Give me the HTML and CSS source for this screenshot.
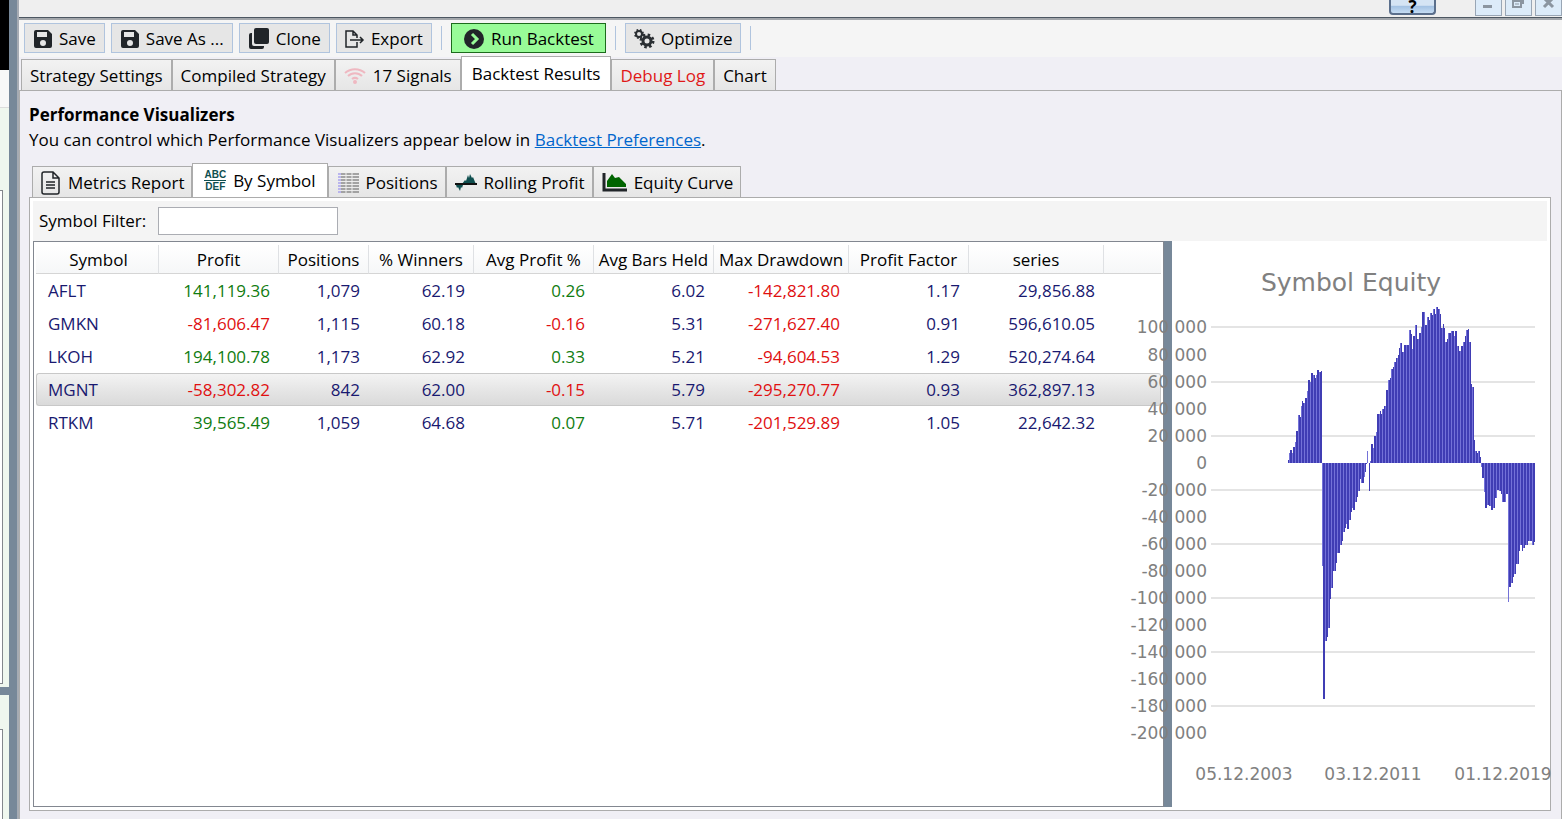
FILE: index.html
```html
<!DOCTYPE html>
<html lang="en">
<head>
  <meta charset="UTF-8">
  <meta name="viewport" content="width=device-width, initial-scale=1.0">
  <title>Backtest Results</title>
  <link rel="stylesheet" href="styles.css">
</head>
<body>
  <div class="dock">
    <div class="dock-dark"></div>
    <div class="dock-head"></div>
    <div class="dock-pane first"><div class="dock-box"></div></div>
    <div class="dock-split"></div>
    <div class="dock-pane second"><div class="dock-box"></div></div>
  </div>
  <div class="splitter"></div>

  <main class="window">
    <header class="titlebar">
      <button class="help" title="Help">?</button>
      <button class="win-btn" title="Minimize">
        <svg width="24" height="15"><path d="M7 5h9v3H7z" fill="#8b95a0"/></svg>
      </button>
      <button class="win-btn" title="Restore">
        <svg width="24" height="15" fill="none" stroke="#8b95a0"><path d="M10 0v-2h7v5h-2" stroke-width="2"/><path d="M7 1h8v6H7z" stroke-width="2"/><path d="M9 4h4"/></svg>
      </button>
      <button class="win-btn" title="Close">
        <svg width="24" height="15"><path d="M8-2l9 9M17-2l-9 9" stroke="#8b95a0" stroke-width="3"/></svg>
      </button>
    </header>

    <div class="toolbar">
      <button class="tool">
        <svg width="20" height="20" viewBox="0 0 20 20"><path fill="#212529" fill-rule="evenodd" d="M3 1h12l4 4v12a2 2 0 0 1-2 2H3a2 2 0 0 1-2-2V3a2 2 0 0 1 2-2zm1 2v5h10V3zM10 11a3 3 0 1 0 0 6 3 3 0 0 0 0-6z"/></svg>
        Save
      </button>
      <button class="tool">
        <svg width="20" height="20" viewBox="0 0 20 20"><path fill="#212529" fill-rule="evenodd" d="M3 1h12l4 4v12a2 2 0 0 1-2 2H3a2 2 0 0 1-2-2V3a2 2 0 0 1 2-2zm1 2v5h10V3zM10 11a3 3 0 1 0 0 6 3 3 0 0 0 0-6z"/></svg>
        Save As ...
      </button>
      <button class="tool">
        <svg width="22" height="22" viewBox="0 0 22 22" fill="#212529"><rect x="6" y="0" width="15" height="16" rx="2"/><path d="M4 5v11a2 2 0 0 0 2 2h10v1a2 2 0 0 1-2 2H3a2 2 0 0 1-2-2V7a2 2 0 0 1 2-2z"/></svg>
        Clone
      </button>
      <button class="tool">
        <svg width="20" height="18" viewBox="0 0 20 18" fill="none" stroke="#212529" stroke-width="1.5"><path d="M12 12v5H1V1h7l4 4v3M8 1v4h4M5 10h13M15 7l3 3-3 3"/></svg>
        Export
      </button>
      <span class="sep"></span>
      <button class="tool run">
        <svg width="22" height="22" viewBox="0 0 22 22"><circle cx="11" cy="11" r="10" fill="#212529"/><path d="M9 6l5 5-5 5" fill="none" stroke="#98fb98" stroke-width="3"/></svg>
        Run Backtest
      </button>
      <span class="sep"></span>
      <button class="tool">
        <svg width="21" height="20" viewBox="0 0 21 20" fill="none" stroke="#2b2f33"><circle cx="13" cy="12" r="4" stroke-width="3"/><circle cx="13" cy="12" r="6" stroke-width="3" stroke-dasharray="2.4 2.3"/><circle cx="5" cy="5" r="3" stroke-width="2"/><circle cx="5" cy="5" r="4" stroke-width="2" stroke-dasharray="1.6 1.6"/></svg>
        Optimize
      </button>
      <span class="sep"></span>
    </div>

    <nav class="tabs main-tabs">
      <button class="tab">Strategy Settings</button>
      <button class="tab">Compiled Strategy</button>
      <button class="tab">
        <svg width="22" height="18" viewBox="0 0 22 18" fill="none" stroke="#efb8c1" stroke-width="2"><path d="M1 6a15 15 0 0 1 20 0M4 9a10 10 0 0 1 14 0M8 12a5 5 0 0 1 6 0"/><circle cx="11" cy="15" r="1"/></svg>
        17 Signals
      </button>
      <button class="tab active">Backtest Results</button>
      <button class="tab debug">Debug Log</button>
      <button class="tab">Chart</button>
    </nav>

    <section class="results">
      <h1>Performance Visualizers</h1>
      <p>You can control which Performance Visualizers appear below in <a href="#">Backtest Preferences</a>.</p>

      <nav class="tabs view-tabs">
        <button class="tab">
          <svg width="20" height="24" viewBox="0 0 20 24" fill="none" stroke="#212529" stroke-width="1.5"><path d="M12 1H3a2 2 0 0 0-2 2v18a2 2 0 0 0 2 2h13a2 2 0 0 0 2-2V7zM12 1v6h6M5 11h9M5 14h9M5 17h9"/></svg>
          Metrics Report
        </button>
        <button class="tab active">
          <span class="abc"><span>ABC</span><span>DEF</span></span>
          By Symbol
        </button>
        <button class="tab">
          <svg width="22" height="22" viewBox="0 0 22 22" fill="none" stroke-width="1.5"><path stroke="#8a8a8a" d="M4 2h18M4 5h18M4 8h18M4 11h18M4 14h18M4 17h18M4 20h18"/><path stroke="#a9a3ee" d="M1 2h3M1 5h3M1 8h3M1 11h3M1 14h3M1 17h3M1 20h3"/><path stroke="#eee" stroke-width="1" d="M9 1v20M15 1v20"/></svg>
          Positions
        </button>
        <button class="tab">
          <svg width="22" height="20" viewBox="0 0 22 20"><path fill="#0f4f4f" d="M7 11l3-4 1 1 2-6 1 3 1-4 2 4 1-1 2 5 1 2z"/><path fill="#0f4f4f" d="M1 12h7l-1 3-1-1-1 4-2-4-1 1z"/><path d="M0 11h22" stroke="#111" stroke-width="2"/></svg>
          Rolling Profit
        </button>
        <button class="tab">
          <svg width="25" height="20" viewBox="0 0 25 20"><path d="M2 0v17h23" fill="none" stroke="#212529" stroke-width="3"/><path fill="#006400" d="M5 14V8l5-7 3 4 4-1 7 7v3z"/></svg>
          Equity Curve
        </button>
      </nav>

      <div class="panel">
        <div class="filter">
          <label for="symbolFilter">Symbol Filter:</label>
          <input type="text" id="symbolFilter">
        </div>
        <div class="split">
          <div class="list">
            <table>
              <colgroup>
                <col class="w123"><col class="w120"><col class="w90"><col class="w105"><col class="w120"><col class="w120"><col class="w135"><col class="w120"><col class="w135"><col>
              </colgroup>
              <thead>
                <tr><th>Symbol</th><th>Profit</th><th>Positions</th><th>% Winners</th><th>Avg Profit %</th><th>Avg Bars Held</th><th>Max Drawdown</th><th>Profit Factor</th><th>series</th><th></th></tr>
              </thead>
              <tbody>
                <tr><td>AFLT</td><td class="pos">141,119.36</td><td>1,079</td><td>62.19</td><td class="pos">0.26</td><td>6.02</td><td class="neg">-142,821.80</td><td>1.17</td><td>29,856.88</td><td></td></tr>
                <tr><td>GMKN</td><td class="neg">-81,606.47</td><td>1,115</td><td>60.18</td><td class="neg">-0.16</td><td>5.31</td><td class="neg">-271,627.40</td><td>0.91</td><td>596,610.05</td><td></td></tr>
                <tr><td>LKOH</td><td class="pos">194,100.78</td><td>1,173</td><td>62.92</td><td class="pos">0.33</td><td>5.21</td><td class="neg">-94,604.53</td><td>1.29</td><td>520,274.64</td><td></td></tr>
                <tr class="selected"><td>MGNT</td><td class="neg">-58,302.82</td><td>842</td><td>62.00</td><td class="neg">-0.15</td><td>5.79</td><td class="neg">-295,270.77</td><td>0.93</td><td>362,897.13</td><td></td></tr>
                <tr><td>RTKM</td><td class="pos">39,565.49</td><td>1,059</td><td>64.68</td><td class="pos">0.07</td><td>5.71</td><td class="neg">-201,529.89</td><td>1.05</td><td>22,642.32</td><td></td></tr>
              </tbody>
            </table>
          </div>
          <div class="splitter"></div>
          <div class="chart">
            <!-- origin is the left end of the zero line, 27 units per 20 000 -->
            <svg viewBox="-39 -222 378 565">
              <defs>
                <pattern id="bars" width="3" height="8" patternUnits="userSpaceOnUse">
                  <rect width="3" height="8" fill="#403db4"/>
                  <rect width="1" height="8" fill="#7472d8"/>
                </pattern>
              </defs>
              <text class="chart-title" x="140" y="-172">Symbol Equity</text>
              <path class="grid" d="M0-136H324M0-81H324M0-27H324M0 27H324M0 81H324M0 135H324M0 189H324M0 243H324"/>
              <path fill="url(#bars)" shape-rendering="crispEdges" d="M77 0V-3H78V-10H79V-13H81V-10H82V-16H84V-21H85V-32H87V-48H89V-46H90V-57H91V-62H92V-60H94V-65H96V-72H97V-83H99V-81H100V-90H102V-88H104V-85H105V-88H106V-93H108V-91H110V-92H111V0Z
                M111 0V103H112V236H114V178H116V174H117V165H119V136H120V125H122V108H125V100H126V90H129V82H131V78H132V69H134V65H135V61H136V66H138V57H140V49H141V45H142V47H144V39H146V34H147V28H149V16H150V20H153V14H154V9H155V1H156V0Z
                M156 0V-12H157V0Z M158 0V28H159V0Z
                M159 0V-2H160V-19H162V-15H163V-27H165V-31H166V-49H169V-52H170V-49H171V-54H173V-57H175V-73H177V-83H179V-85H180V-94H182V-96H183V-101H185V-105H187V-108H188V-115H189V-120H191V-111H193V-118H198V-133H200V-129H201V-114H202V-127H204V-138H206V-124H208V-130H210V-136H211V-151H214V-138H216V-146H218V-143H219V-150H221V-148H222V-154H224V-149H225V-156H227V-154H229V-149H230V-135H232V-139H233V-135H234V-121H236V-124H237V-130H240V-132H243V-127H244V-132H246V-117H248V-112H250V-117H252V-121H254V-127H255V-133H257V-134H258V-121H260V-79H261V-76H263V-23H264V-12H266V-10H267V-12H269V-6H270V0Z
                M270 0V4H271V15H273V29H274V45H276V42H278V43H280V47H282V45H284V35H286V27H288V28H290V31H291V39H295V31H297V139H298V124H300V120H302V114H303V111H305V101H308V88H309V82H311V88H312V85H314V82H317V78H321V82H323V79H324V0Z"/>
              <g class="values">
                <text x="-4" y="-130">100 000</text>
                <text x="-4" y="-102">80 000</text>
                <text x="-4" y="-75">60 000</text>
                <text x="-4" y="-48">40 000</text>
                <text x="-4" y="-21">20 000</text>
                <text x="-4" y="6">0</text>
                <text x="-4" y="33">-20 000</text>
                <text x="-4" y="60">-40 000</text>
                <text x="-4" y="87">-60 000</text>
                <text x="-4" y="114">-80 000</text>
                <text x="-4" y="141">-100 000</text>
                <text x="-4" y="168">-120 000</text>
                <text x="-4" y="195">-140 000</text>
                <text x="-4" y="222">-160 000</text>
                <text x="-4" y="249">-180 000</text>
                <text x="-4" y="276">-200 000</text>
              </g>
              <g class="dates">
                <text x="33" y="317">05.12.2003</text>
                <text x="162" y="317">03.12.2011</text>
                <text x="292" y="317">01.12.2019</text>
              </g>
            </svg>
          </div>
        </div>
      </div>
    </section>
  </main>
</body>
</html>
```

FILE: styles.css
```css
* {
  box-sizing: border-box;
}

body {
  margin: 0;
  height: 100vh;
  display: flex;
  overflow: hidden;
  background: #f0eff5;
  color: #000;
  font-family: "Open Sans", "Noto Sans", sans-serif;
  font-size: 17px;
  line-height: 24px;
}

button, input {
  font: inherit;
  color: inherit;
  margin: 0;
}

svg {
  display: block;
  flex-shrink: 0;
}

/* Neighbouring docked panel */
.dock {
  width: 9px;
  display: flex;
  flex-direction: column;
  background: #eff7ee;
}

.dock-dark {
  height: 70px;
  background: #000;
}

.dock-head {
  height: 38px;
  background: #f8f8f8;
  border-bottom: 1px solid #dcdcdc;
}

.dock-pane {
  width: 3px;
}

.dock-pane.first {
  flex: 1;
  padding: 82px 0 3px;
}

.dock-pane.second {
  height: 124px;
  padding-top: 34px;
}

.dock-box {
  height: 100%;
  background: #fff;
  border: 1px solid #83878c;
  border-left: none;
}

.dock-pane.second .dock-box {
  border-bottom: none;
}

.dock-split {
  height: 8px;
  background: #778899;
}

.splitter {
  width: 8px;
  flex-shrink: 0;
  background: #778899;
}

/* Window */
.window {
  flex: 1;
  min-width: 0;
  display: flex;
  flex-direction: column;
  border-left: 2px solid #a6abb3;
}

.titlebar {
  height: 20px;
  flex-shrink: 0;
  display: flex;
  justify-content: flex-end;
  align-items: flex-start;
  gap: 3px;
  background: #efefef;
  border-bottom: 2px solid #a2a6ab;
  box-shadow: inset 0 -1px #4c5661;
}

.help {
  width: 47px;
  height: 15px;
  margin-right: 36px;
  padding: 0;
  border: 2px solid #5b6f8c;
  border-top: none;
  border-radius: 0 0 4px 4px;
  background: linear-gradient(#d5e4f4 40%, #a5c3e4 50%, #c5dcf3);
  font-weight: 700;
  line-height: 8px;
}

.win-btn {
  width: 27px;
  height: 16px;
  padding: 0;
  background: #dcebf9;
  border: 1px solid #99a6b5;
  border-top: none;
}

.toolbar {
  display: flex;
  align-items: center;
  gap: 6px;
  padding: 3px 5px 4px;
  background: #f5f5f5;
}

.tool {
  height: 30px;
  display: flex;
  align-items: center;
  gap: 6px;
  padding: 1px 8px 0;
  background: #e6e6e6;
  border: 1px solid #b0c4de;
  white-space: nowrap;
}

.tool.run {
  padding: 1px 11px 0;
  background: #98fb98;
  border-color: #1c6b1c;
}

.sep {
  width: 1px;
  height: 24px;
  margin: 0 3px;
  background: #b0c4de;
}

/* Tabs */
.tabs {
  display: flex;
  align-items: flex-end;
}

.tab {
  height: 32px;
  display: flex;
  align-items: center;
  gap: 7px;
  padding: 1px 8px 0;
  background: linear-gradient(#f2f2f2, #e6e6e6);
  border: 1px solid #acacac;
  white-space: nowrap;
}

.tab.active {
  height: 35px;
  padding: 0 11px;
  background: #fff;
  border-bottom-color: #fff;
}

.main-tabs .tab.active {
  padding: 0 10px;
}

.tab.debug {
  color: #e01818;
}

.main-tabs {
  height: 34px;
  padding-left: 2px;
  margin-bottom: -1px;
}

.results {
  flex: 1;
  min-height: 0;
  display: flex;
  flex-direction: column;
  padding: 12px 10px 8px 9px;
  border: 1px solid #acacac;
  border-bottom: none;
}

h1 {
  margin: 0;
  font-size: 17px;
  line-height: 24px;
}

p {
  margin: 1px 0 11px;
}

a {
  color: #0066cc;
}

.view-tabs {
  height: 35px;
  padding-left: 3px;
  margin-bottom: -1px;
}

.view-tabs .tab {
  padding: 1px 7px 0 8px;
}

.view-tabs .tab.active {
  padding: 0 11px;
}

.abc {
  display: flex;
  flex-direction: column;
  font-family: "Liberation Sans", Arial, sans-serif;
  font-size: 10px;
  font-weight: 700;
  line-height: 10px;
  color: #0f4f4f;
}

.abc span + span {
  border-top: 1px solid #0f4f4f;
  padding-top: 1px;
}

.panel {
  flex: 1;
  min-height: 0;
  display: flex;
  flex-direction: column;
  padding: 3px 0 3px 3px;
  background: #fff;
  border: 1px solid #acacac;
}

.filter {
  height: 40px;
  flex-shrink: 0;
  display: flex;
  align-items: center;
  gap: 12px;
  margin-right: 3px;
  padding-left: 6px;
  background: #f4f4f4;
}

.filter input {
  width: 180px;
  height: 28px;
  background: #fff;
  border: 1px solid #abadb3;
}

.split {
  flex: 1;
  min-height: 0;
  display: flex;
}

.list {
  flex: 1;
  min-width: 0;
  padding: 3px 2px;
  border: 1px solid #828790;
}

table {
  width: 100%;
  table-layout: fixed;
  border-collapse: separate;
  border-spacing: 0;
  color: #191970;
}

.w90 { width: 90px; }
.w105 { width: 105px; }
.w120 { width: 120px; }
.w123 { width: 123px; }
.w135 { width: 135px; }

th {
  height: 29px;
  padding: 1px 0 0;
  color: #000;
  font-weight: 400;
  background: linear-gradient(#fff, #f6f7f8);
  border-right: 1px solid #dfe1e4;
  border-bottom: 1px solid #d5d5d5;
  white-space: nowrap;
}

th:first-child {
  padding-left: 3px;
}

th:last-child {
  border-right: none;
}

td {
  height: 33px;
  padding: 0 9px;
  text-align: right;
  white-space: nowrap;
}

td:first-child {
  padding-left: 12px;
  text-align: left;
}

.pos {
  color: #107c10;
}

.neg {
  color: #e01010;
}

.selected td {
  background: linear-gradient(#f3f3f3, #e6e6e6 50%, #dadada);
  border-top: 1px solid #c8c8c8;
  border-bottom: 1px solid #c8c8c8;
}

.selected td:first-child {
  border-left: 1px solid #c8c8c8;
  border-radius: 3px 0 0 3px;
  padding-left: 11px;
}

.selected td:last-child {
  border-right: 1px solid #c8c8c8;
  border-radius: 0 3px 3px 0;
}

/* Chart */
.chart {
  width: 378px;
  flex-shrink: 0;
}

.chart svg {
  position: relative;
  width: 100%;
  overflow: visible;
}

.chart text {
  font-family: "DejaVu Sans", Verdana, sans-serif;
  font-size: 17px;
  fill: #808080;
}

.chart .chart-title {
  font-size: 25px;
  text-anchor: middle;
}

.values text {
  text-anchor: end;
}

.dates text {
  text-anchor: middle;
}

.grid {
  stroke: #e4e4e4;
  stroke-width: 2;
}
```
